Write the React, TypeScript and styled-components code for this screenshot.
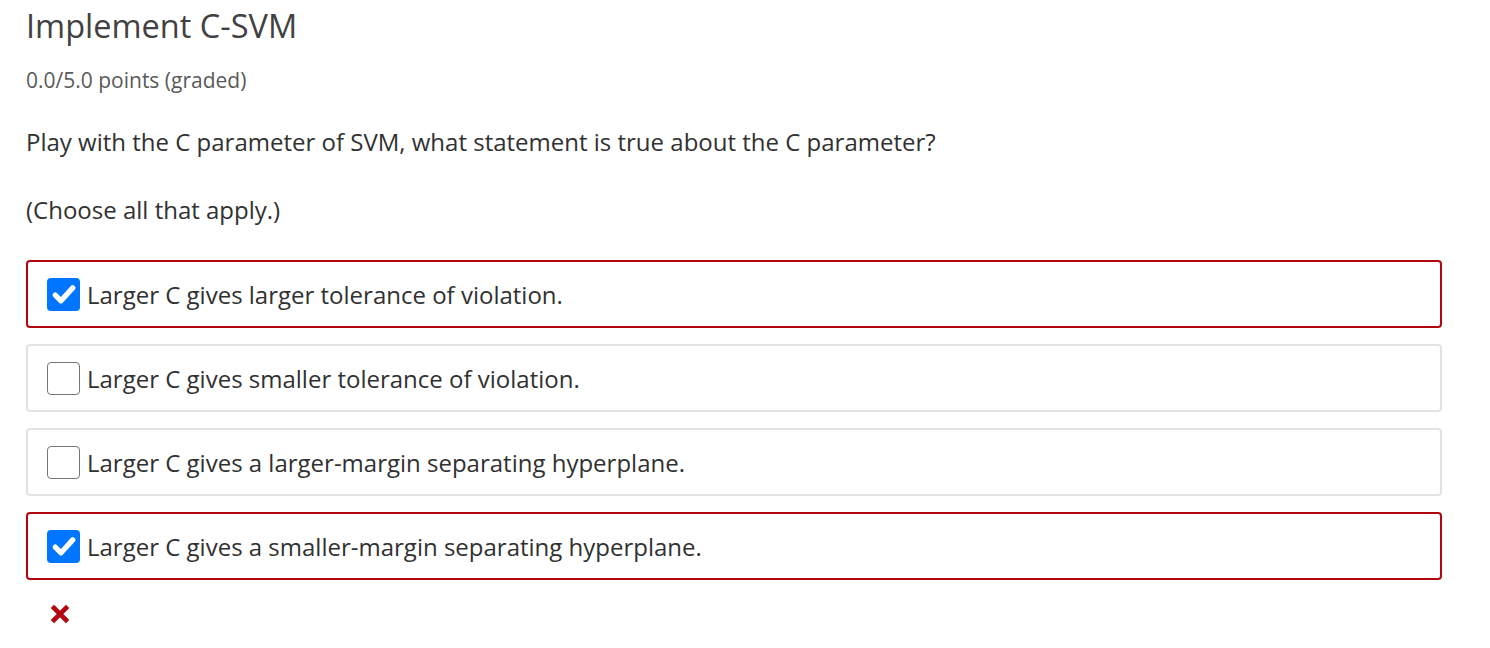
import styled, { createGlobalStyle } from "styled-components";

const GlobalStyle = createGlobalStyle`
  html, body {
    margin: 0;
    padding: 0;
    background: #ffffff;
  }
  body {
    font-family: "Open Sans", "Liberation Sans", sans-serif;
    color: #313131;
  }
`;

type Choice = {
  label: string;
  checked: boolean;
};

const choices: Choice[] = [
  { label: "Larger C gives larger tolerance of violation.", checked: true },
  { label: "Larger C gives smaller tolerance of violation.", checked: false },
  { label: "Larger C gives a larger-margin separating hyperplane.", checked: false },
  { label: "Larger C gives a smaller-margin separating hyperplane.", checked: true },
];

const App = () => {
  return (
    <>
      <GlobalStyle />
      <Problem>
        <Title>Implement C-SVM</Title>
        <Points>0.0/5.0 points (graded)</Points>
        <Question>Play with the C parameter of SVM, what statement is true about the C parameter?</Question>
        <Question>(Choose all that apply.)</Question>
        <ChoiceList>
          {choices.map((c) => (
            <ChoiceRow key={c.label} $wrong={c.checked}>
              <Box $checked={c.checked}>
                {c.checked && (
                  <svg width="28" height="28" viewBox="0 0 16 16">
                    <path
                      d="M3 8.6 L6.3 11.9 L13 4.5"
                      fill="none"
                      stroke="#ffffff"
                      strokeWidth="3"
                      strokeLinecap="round"
                      strokeLinejoin="round"
                    />
                  </svg>
                )}
              </Box>
              <ChoiceLabel>{c.label}</ChoiceLabel>
            </ChoiceRow>
          ))}
        </ChoiceList>
        <Status>
          <svg width="20" height="20" viewBox="0 0 20 20">
            <path
              d="M4 4 L16 16 M16 4 L4 16"
              stroke="#b20610"
              strokeWidth="4.6"
              strokeLinecap="square"
            />
          </svg>
        </Status>
      </Problem>
    </>
  );
};

export default App;

const Problem = styled.div`
  padding: 0 48px 0 26px;
  width: 1416px;
`;

const Title = styled.h2`
  margin: 0;
  padding-top: 5px;
  font-size: 32.5px;
  font-weight: 400;
  line-height: 42px;
  color: #414141;
`;

const Points = styled.div`
  margin-top: 20px;
  font-size: 21px;
  line-height: 26px;
  color: #5a5a5a;
`;

const Question = styled.p`
  margin: 30px 0 0;
  font-size: 24px;
  line-height: 38px;
  color: #313131;
`;

const ChoiceList = styled.div`
  display: flex;
  flex-direction: column;
  gap: 16px;
  margin-top: 31px;
`;

const ChoiceRow = styled.label<{ $wrong: boolean }>`
  display: flex;
  align-items: center;
  gap: 7px;
  height: 68px;
  box-sizing: border-box;
  padding-left: 19px;
  border: 2px solid ${(p) => (p.$wrong ? "#b20610" : "#e2e2e2")};
  border-radius: 4px;
`;

const Box = styled.span<{ $checked: boolean }>`
  display: flex;
  align-items: center;
  justify-content: center;
  width: 33px;
  height: 33px;
  box-sizing: border-box;
  border-radius: 4px;
  background: ${(p) => (p.$checked ? "#0075ff" : "#ffffff")};
  border: ${(p) => (p.$checked ? "none" : "1.5px solid #767676")};
`;

const ChoiceLabel = styled.span`
  font-size: 24px;
  color: #313131;
`;

const Status = styled.div`
  margin-top: 24px;
  padding-left: 24px;
  height: 24px;
`;
